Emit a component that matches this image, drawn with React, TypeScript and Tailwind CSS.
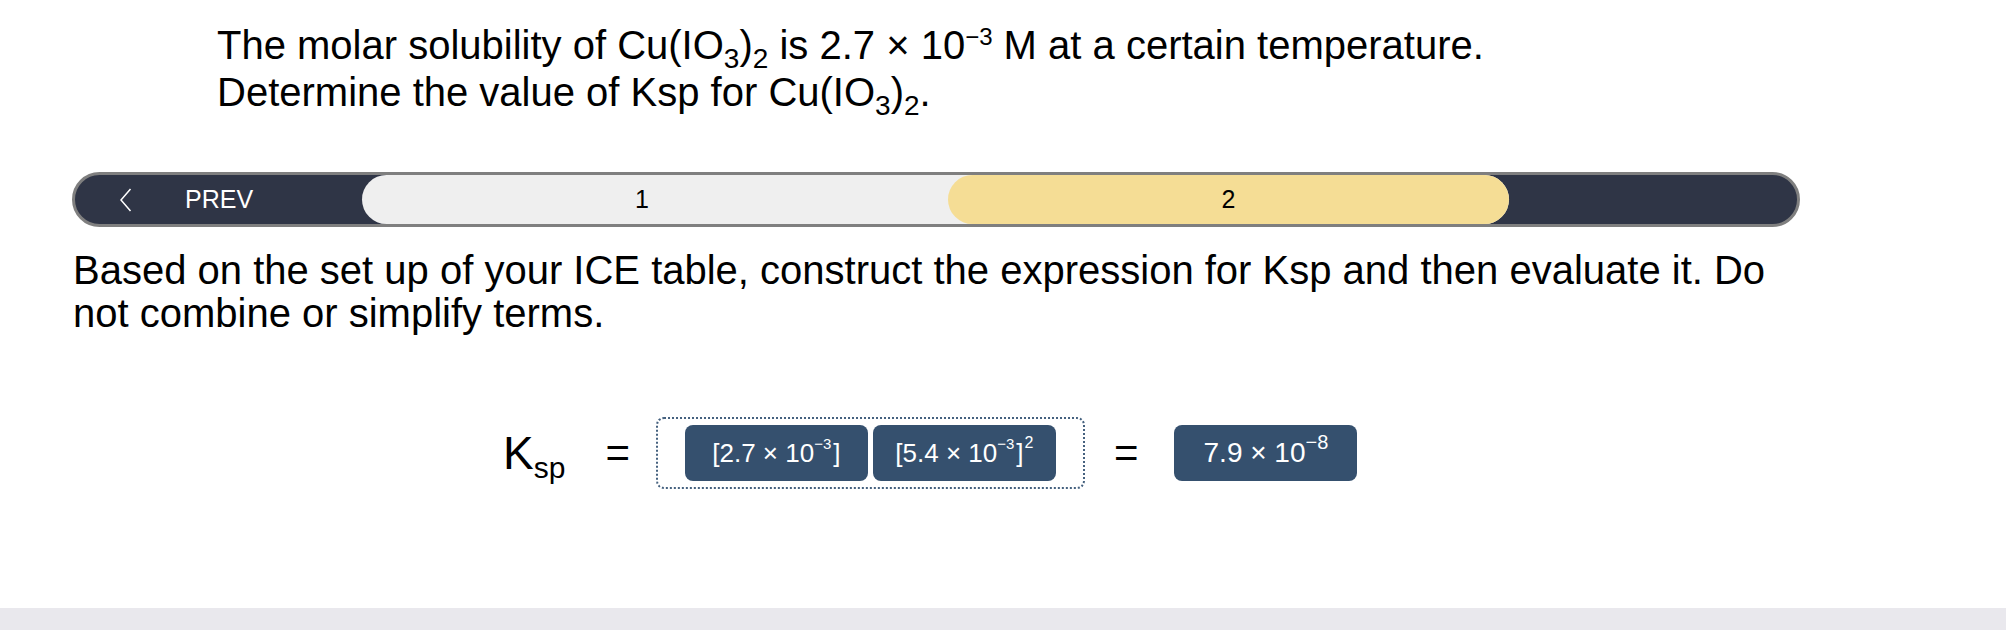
import React from 'react';

const Sub: React.FC<{ children: React.ReactNode; className?: string }> = ({ children, className }) => (
  <span className={`relative leading-none ${className ?? 'top-[9px] text-[28px]'}`}>{children}</span>
);

const Sup: React.FC<{ children: React.ReactNode; className?: string }> = ({ children, className }) => (
  <span className={`relative leading-none ${className ?? '-top-[14px] text-[24px]'}`}>{children}</span>
);

const App: React.FC = () => {
  return (
    <div className="h-[630px] flex flex-col bg-white text-black font-['Liberation_Sans',Arial,sans-serif]">
      {/* Question */}
      <div className="pl-[217px] pt-[22px] text-[40px] leading-[47px]">
        The molar solubility of Cu(IO<Sub>3</Sub>)<Sub>2</Sub> is 2.7 × 10<Sup>−3</Sup> M at a certain temperature.
        <br />
        Determine the value of Ksp for Cu(IO<Sub>3</Sub>)<Sub>2</Sub>.
      </div>

      {/* Step navigation */}
      <div className="ml-[72px] mt-[56px] w-[1728px] h-[55px] rounded-full border-[3px] border-[#7f7f7f] bg-[#2f3546] flex items-stretch overflow-hidden">
        <div className="w-[287px] flex items-center">
          <svg className="ml-[44px]" width="13" height="24" viewBox="0 0 13 24" fill="none">
            <polyline points="11.5,1 2,12 11.5,23" stroke="#ffffff" strokeWidth="1.5" />
          </svg>
          <span className="ml-[53px] text-[25px] text-white">PREV</span>
        </div>
        <div className="w-[1147px] flex rounded-full bg-[#efefef]">
          <div className="w-[560px] flex items-center justify-center text-[25px]">1</div>
          <div className="ml-auto w-[561px] flex items-center justify-center rounded-full bg-[#f5dd95] text-[25px]">2</div>
        </div>
      </div>

      {/* Instructions */}
      <div className="ml-[73px] mt-[22px] w-[1727px] text-[40px] leading-[43px]">
        Based on the set up of your ICE table, construct the expression for Ksp and then evaluate it. Do not combine or simplify terms.
      </div>

      {/* Ksp expression */}
      <div className="mt-[82px] ml-[503px] flex items-center">
        <div className="text-[46px] leading-[46px]">
          K<Sub className="top-[9px] text-[30px]">sp</Sub>
        </div>
        <div className="ml-[40px] text-[42px] leading-none">=</div>
        <div className="ml-[26px] flex gap-[5px] rounded-[8px] border-2 border-dotted border-[#45617f] px-[27px] py-[6px]">
          <div className="w-[183px] h-[56px] rounded-[8px] bg-[#35506e] text-white text-[26px] flex items-center justify-center">
            [2.7 × 10<Sup className="-top-[10px] text-[15px] mr-[2px]">−3</Sup>]
          </div>
          <div className="w-[183px] h-[56px] rounded-[8px] bg-[#35506e] text-white text-[26px] flex items-center justify-center">
            [5.4 × 10<Sup className="-top-[10px] text-[15px] mr-[2px]">−3</Sup>]<Sup className="-top-[10px] text-[16px] ml-[1px]">2</Sup>
          </div>
        </div>
        <div className="ml-[29px] text-[42px] leading-none">=</div>
        <div className="ml-[36px] w-[183px] h-[56px] rounded-[8px] bg-[#35506e] text-white text-[28px] flex items-center justify-center">
          7.9 × 10<Sup className="-top-[11px] text-[20px]">−8</Sup>
        </div>
      </div>

      <div className="flex-1" />
      <div className="h-[22px] bg-[#e9e8ed]" />
    </div>
  );
};

export default App;
